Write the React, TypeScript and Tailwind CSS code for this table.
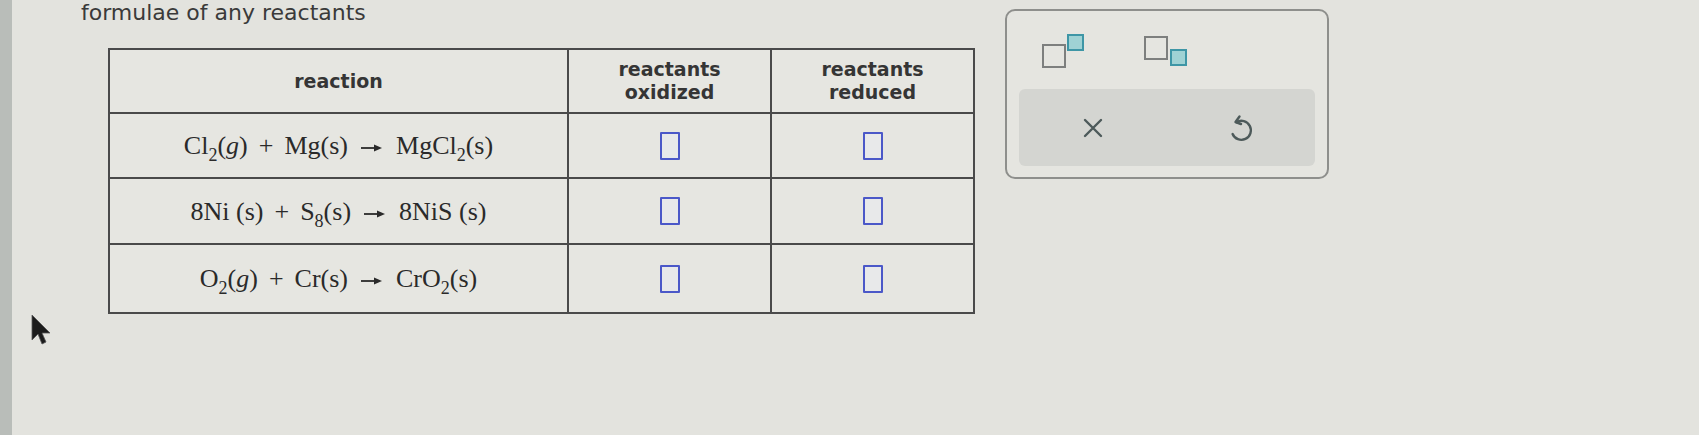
import React from "react";

const Box = () => (
  <div className="w-[20px] h-[28px] border-2 border-[#4b58c8] bg-[#e8e9ea] rounded-[1px]" />
);

const Sub = ({ children }: { children: React.ReactNode }) => (
  <span className="text-[18px] relative top-[7px] leading-none">{children}</span>
);

const Plus = () => <span className="mx-[11px]">+</span>;
const Arrow = () => (
  <span className="mx-[13px] inline-flex items-center align-middle">
    <svg width="22" height="10" viewBox="0 0 22 10">
      <path d="M0 5 H14" stroke="#2a2a2a" strokeWidth="1.8" />
      <path d="M13 1.5 L21 5 L13 8.5 Z" fill="#2a2a2a" />
    </svg>
  </span>
);

const rows: React.ReactNode[] = [
  <>
    Cl<Sub>2</Sub>(<i>g</i>)<Plus />Mg(s)<Arrow />MgCl<Sub>2</Sub>(s)
  </>,
  <>
    8Ni&nbsp;(s)<Plus />S<Sub>8</Sub>(s)<Arrow />8NiS&nbsp;(s)
  </>,
  <>
    O<Sub>2</Sub>(<i>g</i>)<Plus />Cr(s)<Arrow />CrO<Sub>2</Sub>(s)
  </>,
];

const rowHeights = ["h-[65px]", "h-[66px]", "h-[69px]"];

export default function App() {
  return (
    <div className="relative flex h-[435px] w-full overflow-hidden bg-[#e3e3de]">
      <div className="w-[12px] shrink-0 bg-[#b9bdb9]" />
      <div className="flex flex-col pl-[69px]">
        <div
          className="pt-[2px] text-[22px] leading-[22px] text-[#3a3a3a] whitespace-nowrap"
          style={{ fontFamily: '"DejaVu Sans", Verdana, sans-serif' }}
        >
          formulae of any reactants
        </div>
        <table className="ml-[27px] mt-[24px] border-collapse border-2 border-[#4a4a4a] bg-[#e6e6e1]">
          <thead>
            <tr className="h-[64px]">
              {["reaction", "reactants\noxidized", "reactants\nreduced"].map((h, i) => (
                <th
                  key={i}
                  className={`border-2 border-[#4a4a4a] text-[19px] leading-[23px] font-bold text-[#353535] whitespace-pre-line text-center align-middle ${
                    i === 0 ? "w-[459px]" : "w-[203px]"
                  }`}
                  style={{ fontFamily: '"DejaVu Sans", Verdana, sans-serif' }}
                >
                  {h}
                </th>
              ))}
            </tr>
          </thead>
          <tbody>
            {rows.map((r, i) => (
              <tr key={i} className={rowHeights[i]}>
                <td
                  className="border-2 border-[#4a4a4a] text-center align-middle text-[26px] text-[#2a2a2a] whitespace-nowrap"
                  style={{ fontFamily: '"Liberation Serif", "Times New Roman", serif' }}
                >
                  {r}
                </td>
                <td className="border-2 border-[#4a4a4a] align-middle">
                  <div className="flex justify-center">
                    <Box />
                  </div>
                </td>
                <td className="border-2 border-[#4a4a4a] align-middle">
                  <div className="flex justify-center">
                    <Box />
                  </div>
                </td>
              </tr>
            ))}
          </tbody>
        </table>
      </div>

      <div className="ml-[30px] mt-[9px] flex h-[170px] w-[324px] flex-col rounded-[10px] border-2 border-[#8e8f8c] bg-[#e5e5e0] px-[12px] pb-[11px]">
        <div className="flex h-[74px] items-center gap-[58px] pl-[23px] pt-[6px]">
          <div className="relative h-[34px] w-[44px]">
            <div className="absolute left-0 bottom-0 h-[24px] w-[24px] border-2 border-[#7d7f7e]" />
            <div className="absolute left-[25px] top-0 h-[17px] w-[17px] border-2 border-[#3e96a6] bg-[#9fd2d4]" />
          </div>
          <div className="relative h-[30px] w-[44px]">
            <div className="absolute left-0 top-0 h-[24px] w-[24px] border-2 border-[#7d7f7e]" />
            <div className="absolute left-[26px] bottom-0 h-[17px] w-[17px] border-2 border-[#3e96a6] bg-[#9fd2d4]" />
          </div>
        </div>
        <div className="mt-[4px] flex flex-1 rounded-[6px] bg-[#d4d5d1]">
          <div className="flex flex-1 items-center justify-center">
            <svg width="22" height="22" viewBox="0 0 22 22" fill="none" stroke="#4d5a5a" strokeWidth="2.4" strokeLinecap="round">
              <path d="M3 3 L19 19 M19 3 L3 19" />
            </svg>
          </div>
          <div className="flex flex-1 items-center justify-center">
            <svg width="26" height="30" viewBox="0 0 26 30" fill="none" stroke="#4d5a5a" strokeWidth="2.4" strokeLinecap="round" strokeLinejoin="round">
              <path d="M8.5 9.2 A 9.5 9.5 0 1 1 4.6 21" />
              <path d="M11.5 3.5 L7.5 9 L13 11" />
            </svg>
          </div>
        </div>
      </div>

      <svg className="absolute left-[31px] top-[314px]" width="22" height="32" viewBox="0 0 22 32">
        <path d="M1 1 L1 26 L7 20 L11 30 L15 28 L11 19 L19 19 Z" fill="#1c1c1c" stroke="#555" strokeWidth="0.8" />
      </svg>
    </div>
  );
}
